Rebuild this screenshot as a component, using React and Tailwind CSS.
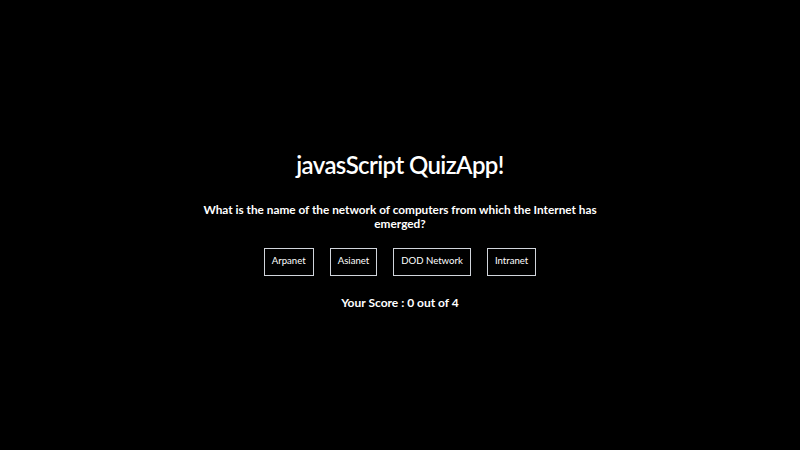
import { useState } from 'react';

const questions = [
    {
        text: 'What is the name of the network of computers from which the Internet has emerged?',
        options: ['Arpanet', 'Asianet', 'DOD Network', 'Intranet'],
    },
];

export default function App() {
    const [current] = useState(0);
    const [score] = useState(0);
    const q = questions[current];

    return (
        <div
            className="min-h-screen w-full bg-black text-white flex flex-col items-center justify-center pt-[14px]"
            style={{ fontFamily: 'Lato, "Noto Sans", sans-serif' }}
        >
            <h1 className="text-[24px] font-semibold leading-none tracking-tight">javasScript QuizApp!</h1>

            <p className="mt-[26px] max-w-[400px] text-center text-[11.8px] font-bold leading-[14px]">
                {q.text}
            </p>

            <div className="mt-[17px] flex gap-[16px]">
                {q.options.map((opt) => (
                    <button
                        key={opt}
                        type="button"
                        className="h-[28px] px-[7px] border border-gray-300 text-[9.6px] text-white"
                    >
                        {opt}
                    </button>
                ))}
            </div>

            <div className="mt-[18px] text-[12px] font-bold">
                Your Score : {score} out of 4
            </div>
        </div>
    );
}
